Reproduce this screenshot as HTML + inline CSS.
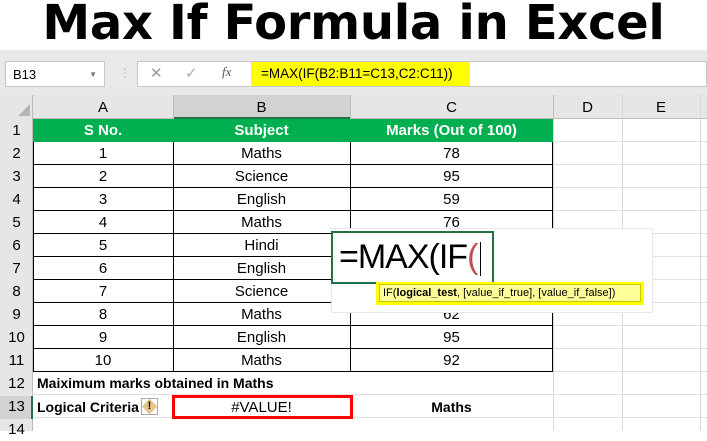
<!DOCTYPE html>
<html><head><style>
body{margin:0;width:707px;height:431px;overflow:hidden;background:#fff;font-family:"Liberation Sans",Arial,sans-serif;position:relative}
.a{position:absolute}
.t{font-family:"DejaVu Sans",sans-serif;font-weight:bold;font-size:48px;left:0;width:707px;text-align:center;top:-5px;letter-spacing:-0.3px}
.c{position:absolute;text-align:center;font-size:15px;color:#000;line-height:23px}
</style></head><body>
<div class="a t">Max If Formula in Excel</div>
<div class="a" style="left:0;top:50px;width:707px;height:45px;background:#e9e9e9"></div>
<div class="a" style="left:5px;top:61px;width:100px;height:26px;background:#fff;border:1px solid #c8c8c8;font-size:13px;line-height:26px;box-sizing:border-box;padding-left:7px">B13<span style="position:absolute;right:7px;color:#777;font-size:8px">▼</span></div>
<div class="a" style="left:119px;top:66px;color:#bbb;font-size:12px">⋮</div>
<div class="a" style="left:137px;top:61px;width:570px;height:26px;background:#fff;border:1px solid #c8c8c8;box-sizing:border-box"></div>
<div class="a" style="left:150px;top:64px;color:#999;font-size:15px">✕</div>
<div class="a" style="left:185px;top:64px;color:#aaa;font-size:15px">✓</div>
<div class="a" style="left:222px;top:64px;color:#555;font-size:13px;font-style:italic;font-family:'Liberation Serif',serif">fx</div>
<div class="a" style="left:251px;top:62px;width:219px;height:24px;background:#ffff00;font-size:13.5px;line-height:24px;padding-left:10px;box-sizing:border-box">=MAX(IF(B2:B11=C13,C2:C11))</div>
<div class="a" style="left:0;top:95px;width:707px;height:24px;background:#e6e6e6;border-bottom:1px solid #bdbdbd;box-sizing:border-box"></div>
<div class="a" style="left:0;top:95px;width:33px;height:336px;background:#e6e6e6;border-right:1px solid #bdbdbd;box-sizing:border-box"></div>
<div class="a" style="left:173px;top:95px;width:177px;height:24px;background:#d2d2d2;border-bottom:2px solid #217346;box-sizing:border-box"></div>
<div class="a" style="left:0;top:396px;width:33px;height:23px;background:#d2d2d2;border-right:2px solid #217346;box-sizing:border-box"></div>
<svg class="a" style="left:18px;top:104px" width="12" height="12"><path d="M12 0V12H0Z" fill="#b5b5b5"/></svg>
<div class="c" style="left:33px;top:96px;width:140px">A</div>
<div class="c" style="left:173px;top:96px;width:177px">B</div>
<div class="c" style="left:350px;top:96px;width:203px">C</div>
<div class="c" style="left:553px;top:96px;width:69px">D</div>
<div class="c" style="left:622px;top:96px;width:78px">E</div>
<div class="a" style="left:33px;top:119px;width:674px;height:312px;background:
repeating-linear-gradient(to bottom,transparent 0,transparent 22px,#e0e0e0 22px,#e0e0e0 23px)"></div>
<div class="a" style="left:553px;top:95px;width:1px;height:336px;background:#d8d8d8"></div>
<div class="a" style="left:622px;top:95px;width:1px;height:336px;background:#d8d8d8"></div>
<div class="a" style="left:700px;top:95px;width:1px;height:336px;background:#d8d8d8"></div>
<div class="a" style="left:173px;top:95px;width:1px;height:24px;background:#bdbdbd"></div>
<div class="a" style="left:350px;top:95px;width:1px;height:24px;background:#bdbdbd"></div>
<div class="a" style="left:553px;top:95px;width:1px;height:24px;background:#bdbdbd"></div>
<div class="a" style="left:33px;top:119px;width:520px;height:23px;background:#00b050"></div>
<div class="c" style="left:33px;top:119px;width:140px;color:#fff;font-weight:bold">S No.</div>
<div class="c" style="left:173px;top:119px;width:177px;color:#fff;font-weight:bold">Subject</div>
<div class="c" style="left:350px;top:119px;width:203px;color:#fff;font-weight:bold">Marks (Out of 100)</div>
<div id="tb"></div>
<script>
var d=[[1,"Maths",78],[2,"Science",95],[3,"English",59],[4,"Maths",76],[5,"Hindi",""],[6,"English",""],[7,"Science",""],[8,"Maths",62],[9,"English",95],[10,"Maths",92]];
var h="";
for(var i=0;i<d.length;i++){var y=142+i*23;
h+='<div class="a" style="left:33px;top:'+y+'px;width:520px;height:23px;border:1px solid #000;border-top:none;box-sizing:border-box;background:#fff"></div>';
h+='<div class="a" style="left:173px;top:'+y+'px;width:1px;height:23px;background:#000"></div><div class="a" style="left:350px;top:'+y+'px;width:1px;height:23px;background:#000"></div>';
h+='<div class="c" style="left:33px;top:'+y+'px;width:140px">'+d[i][0]+'</div><div class="c" style="left:173px;top:'+y+'px;width:177px">'+d[i][1]+'</div><div class="c" style="left:350px;top:'+y+'px;width:203px">'+d[i][2]+'</div>';}
for(var r=1;r<=14;r++){h+='<div class="c" style="left:0;top:'+(119+(r-1)*23)+'px;width:33px">'+r+'</div>';}
document.getElementById("tb").innerHTML=h;
</script>
<div class="c" style="left:37px;top:372px;font-weight:bold;text-align:left;font-size:14px">Maiximum marks obtained in Maths</div>
<div class="c" style="left:37px;top:396px;font-weight:bold;text-align:left;font-size:14px">Logical Criteria</div>
<div class="a" style="left:141px;top:398px;width:17px;height:17px;border:1px solid #aaa;background:#fff;box-sizing:border-box"><div style="position:absolute;left:2px;top:2px;width:11px;height:11px;background:#e6c48a;transform:rotate(45deg)"></div><div style="position:absolute;left:0;width:15px;top:0;text-align:center;font-size:11px;font-weight:bold;line-height:15px">!</div></div>
<div class="a" style="left:172px;top:395px;width:181px;height:24px;border:3px solid #ff0000;box-sizing:border-box"></div>
<div class="c" style="left:173px;top:396px;width:177px">#VALUE!</div>
<div class="c" style="left:350px;top:396px;width:203px;font-weight:bold;font-size:14px">Maths</div>
<div class="a" style="left:331px;top:228px;width:322px;height:85px;background:#fff;border:1px solid #e8e8e8;box-sizing:border-box"></div>
<div class="a" style="left:331px;top:231px;width:163px;height:53px;border:2px solid #217346;box-sizing:border-box;font-size:34px;line-height:48px;padding-left:6px;letter-spacing:-1px">=MAX(IF<span style="color:#c0504d">(</span><span style="display:inline-block;width:1px;height:34px;background:#000;vertical-align:middle;margin-left:3px"></span></div>
<div class="a" style="left:376px;top:282px;width:268px;height:23px;background:#ffff00"></div>
<div class="a" style="left:379px;top:284px;width:262px;height:18px;background:#ffff99;border:1px solid #c8c800;box-sizing:border-box;font-size:11px;line-height:16px;padding-left:3px">IF(<b>logical_test</b>, [value_if_true], [value_if_false])</div>
</body></html>
